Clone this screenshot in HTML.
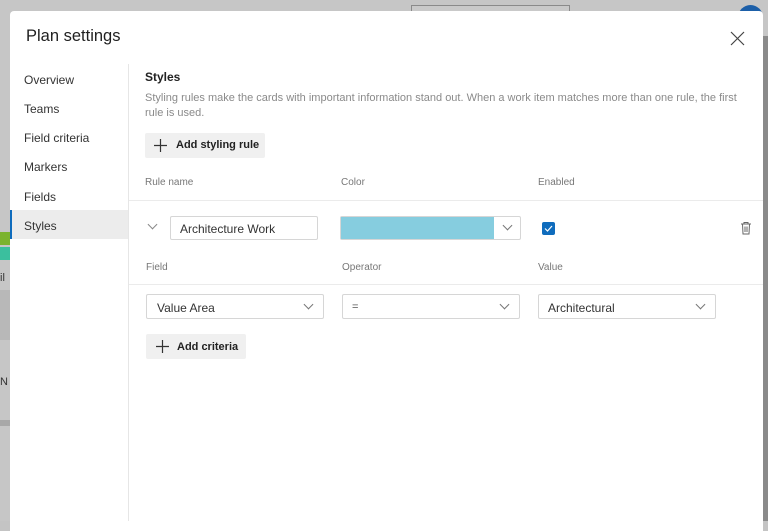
<!DOCTYPE html>
<html><head><meta charset="utf-8"><style>
*{box-sizing:border-box;margin:0;padding:0}
body{width:768px;height:521px;overflow:hidden;position:relative;background:#c4c4c4;font-family:"Liberation Sans",sans-serif;color:#323130}
.abs{position:absolute}
.t{position:absolute;white-space:nowrap}
.modal{left:10px;top:11px;width:753px;height:520px;background:#fff;border-radius:4px 4px 0 0}
.nav{font-size:12px;color:#333;left:24px}
.hdr{font-size:10px;color:#777}
.box{position:absolute;border:1px solid #d6d6d6;border-radius:2px;background:#fff;height:25px}
.btn{position:absolute;background:#f0f0f0;border-radius:2px;font-size:11px;font-weight:bold;color:#222}
.chev{position:absolute;width:7px;height:7px;border-right:1px solid #666;border-bottom:1px solid #666;transform:rotate(45deg)}
</style></head><body>
<div class="abs" style="left:0;top:0;width:768px;height:521px;background:#c6c6c6"></div>
<div class="abs" style="left:411px;top:5px;width:159px;height:10px;border:1px solid #8a8a8a;border-bottom:none;background:#c9c9c9"></div>
<div class="abs" style="left:738px;top:5px;width:25px;height:25px;border-radius:50%;background:#1c5fa8"></div>
<div class="abs" style="left:763px;top:36px;width:5px;height:485px;background:#8a8a8a"></div>
<div class="abs" style="left:0;top:232px;width:10px;height:13px;background:#7bb32e"></div>
<div class="abs" style="left:0;top:247px;width:10px;height:13px;background:#3bbf9e"></div>
<div class="abs" style="left:0;top:290px;width:10px;height:50px;background:#b8b8b8"></div>
<div class="abs" style="left:0;top:420px;width:10px;height:6px;background:#a8a8a8"></div>
<div class="t" style="left:0;top:272px;font-size:11px;color:#333">il</div>
<div class="t" style="left:0;top:376px;font-size:11px;color:#333">N</div>

<div class="abs modal"></div>
<div class="t" style="left:26px;top:27px;font-size:16.5px;color:#1f1f1f">Plan settings</div>
<svg class="abs" style="left:730px;top:31px" width="15" height="15" viewBox="0 0 15 15"><path d="M1 1L14 14M14 1L1 14" stroke="#444" stroke-width="1.2"/></svg>

<div class="abs" style="left:10px;top:210px;width:118px;height:29px;background:#ececec"></div>
<div class="abs" style="left:10px;top:210px;width:2px;height:29px;background:#0f6cbd"></div>
<div class="t nav" style="top:73px">Overview</div>
<div class="t nav" style="top:102px">Teams</div>
<div class="t nav" style="top:131px">Field criteria</div>
<div class="t nav" style="top:160px">Markers</div>
<div class="t nav" style="top:190px">Fields</div>
<div class="t nav" style="top:219px">Styles</div>
<div class="abs" style="left:128px;top:64px;width:1px;height:457px;background:#e6e6e6"></div>

<div class="t" style="left:145px;top:70px;font-size:12px;font-weight:bold;color:#222">Styles</div>
<div class="t" style="left:145px;top:91px;font-size:11px;color:#8a8a8a;line-height:15px">Styling rules make the cards with important information stand out. When a work item matches more than one rule, the first<br>rule is used.</div>
<div class="btn" style="left:145px;top:133px;width:120px;height:25px">
<svg class="abs" style="left:9px;top:6px" width="13" height="13"><path d="M6.5 0V13M0 6.5H13" stroke="#333" stroke-width="1.2"/></svg>
<span class="t" style="left:31px;top:6px">Add styling rule</span></div>

<div class="t hdr" style="left:145px;top:177px">Rule name</div>
<div class="t hdr" style="left:341px;top:177px">Color</div>
<div class="t hdr" style="left:538px;top:177px">Enabled</div>
<div class="abs" style="left:129px;top:200px;width:634px;height:1px;background:#ebebeb"></div>

<div class="chev" style="left:149px;top:221px;border-color:#888"></div>
<div class="box" style="left:170px;top:216px;width:148px;height:24px"><span class="t" style="left:9px;top:5px;font-size:12px;color:#333">Architecture Work</span></div>
<div class="box" style="left:340px;top:216px;width:181px;height:24px"><div class="abs" style="left:0;top:0;width:153px;height:22px;background:#86cddf"></div><div class="chev" style="left:163px;top:5px;border-color:#777"></div></div>
<div class="abs" style="left:542px;top:222px;width:13px;height:13px;background:#0f6cbd;border-radius:2px"><svg class="abs" style="left:2px;top:2px" width="9" height="9"><path d="M1 4.5L3.5 7L8 2" stroke="#fff" stroke-width="1.2" fill="none"/></svg></div>
<svg class="abs" style="left:740px;top:221px" width="12" height="14" viewBox="0 0 12 14"><path d="M1 3H11M4 3V1.5H8V3M2.5 3L3 13H9L9.5 3M5 5.5V11M7 5.5V11" stroke="#666" stroke-width="1" fill="none"/></svg>

<div class="t hdr" style="left:146px;top:262px">Field</div>
<div class="t hdr" style="left:342px;top:262px">Operator</div>
<div class="t hdr" style="left:538px;top:262px">Value</div>
<div class="abs" style="left:129px;top:284px;width:634px;height:1px;background:#ebebeb"></div>

<div class="box" style="left:146px;top:294px;width:178px;height:25px"><span class="t" style="left:10px;top:6px;font-size:12px;color:#333">Value Area</span><div class="chev" style="left:158px;top:6px;border-color:#777"></div></div>
<div class="box" style="left:342px;top:294px;width:178px;height:25px"><span class="t" style="left:9px;top:6px;font-size:11px;color:#555">=</span><div class="chev" style="left:158px;top:6px;border-color:#777"></div></div>
<div class="box" style="left:538px;top:294px;width:178px;height:25px"><span class="t" style="left:9px;top:6px;font-size:12px;color:#333">Architectural</span><div class="chev" style="left:158px;top:6px;border-color:#777"></div></div>

<div class="btn" style="left:146px;top:334px;width:100px;height:25px">
<svg class="abs" style="left:10px;top:6px" width="13" height="13"><path d="M6.5 0V13M0 6.5H13" stroke="#333" stroke-width="1.2"/></svg>
<span class="t" style="left:31px;top:7px">Add criteria</span></div>
</body></html>
